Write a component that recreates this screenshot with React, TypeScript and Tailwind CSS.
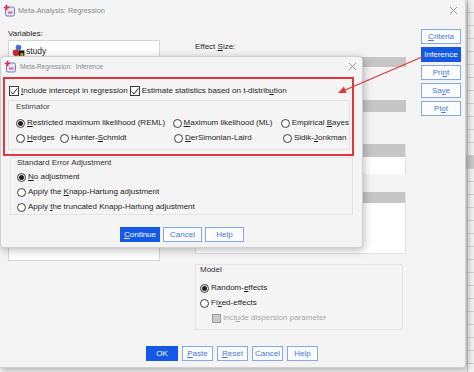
import React from "react";

const U = ({ c }: { c: string }) => <span className="underline underline-offset-[1px]">{c}</span>;

function Radio({ on }: { on?: boolean }) {
  return (
    <span className="w-[9px] h-[9px] rounded-full border border-[#3a3a3a] bg-white flex items-center justify-center shrink-0">
      {on && <span className="w-[5px] h-[5px] rounded-full bg-[#1f1f1f]" />}
    </span>
  );
}

function Check() {
  return (
    <span className="w-[10px] h-[10px] border border-[#3a3a3a] bg-white flex items-center justify-center shrink-0">
      <svg width="9" height="9" viewBox="0 0 9 9">
        <path d="M1 4.6 L3.4 7.2 L8.2 1" fill="none" stroke="#222" strokeWidth="1.1" />
      </svg>
    </span>
  );
}

function RItem({ on, children, className = "" }: { on?: boolean; children: React.ReactNode; className?: string }) {
  return (
    <div className={"flex items-center gap-[2px] h-[10px] " + className}>
      <Radio on={on} />
      <span className="whitespace-nowrap">{children}</span>
    </div>
  );
}

function CloseX() {
  return (
    <svg width="9" height="9" viewBox="0 0 9 9">
      <path d="M1 1 L8 8 M8 1 L1 8" stroke="#8d8d8d" strokeWidth="0.9" />
    </svg>
  );
}

function DlgIcon() {
  return (
    <svg width="13" height="13" viewBox="0 0 13 13">
      <rect x="2.5" y="3" width="9" height="9" rx="1.6" fill="#e9e4f3" stroke="#6a7fc4" strokeWidth="1" />
      <rect x="5" y="7.5" width="4.5" height="2" fill="#d86a8a" />
      <path d="M3.5 0.8 V6.2 M0.8 3.5 H6.2" stroke="#d6314f" strokeWidth="1.7" />
    </svg>
  );
}

function VarIcon() {
  return (
    <svg width="13" height="13" viewBox="0 0 13 13">
      <circle cx="6.5" cy="3.6" r="2.8" fill="#3f6fd1" />
      <circle cx="4" cy="8.8" r="3.3" fill="#d8262e" />
      <rect x="6.8" y="6.4" width="5.6" height="6.3" fill="#1b1b1b" />
      <text x="8" y="11.6" fontSize="6" fontFamily="Liberation Sans, sans-serif" fill="#f4d21f" fontWeight="bold">a</text>
    </svg>
  );
}

function Btn({ children, primary, className = "" }: { children: React.ReactNode; primary?: boolean; className?: string }) {
  return (
    <div
      className={
        "h-[15px] flex items-center justify-center border leading-[10px] " +
        (primary
          ? "bg-[#1459e6] border-[#1459e6] text-white "
          : "bg-[#fbfcff] border-[#86a9ec] text-[#4a78d4] ") +
        className
      }
    >
      {children}
    </div>
  );
}

export default function App() {
  const rows = Array.from({ length: 29 });
  return (
    <div className="relative w-[474px] h-[372px] overflow-hidden bg-[#ececec] font-['Liberation_Sans',sans-serif] text-[8px] leading-[10px] text-[#1f1f1f]">
      {/* spreadsheet behind */}
      <div className="flex flex-col">
        {rows.map((_, i) => (
          <div
            key={i}
            className={
              "h-[13px] border-b border-[#cfcfcf] flex " + (i === 12 ? "bg-[#c9c9c9]" : "bg-[#f1f1f1]")
            }
          >
            <div className="w-[468px] border-r border-[#c8c8c8]" />
          </div>
        ))}
      </div>

      {/* Main window */}
      <div className="absolute left-0 top-0 w-[466px] h-[368px] bg-[#f4f4f4] border-r border-b border-[#cfcfcf] rounded-br-[4px] shadow-[2px_2px_6px_rgba(0,0,0,0.28)] flex flex-col">
        <div className="h-[21px] flex items-center pl-[3px] pr-[4px] shrink-0">
          <DlgIcon />
          <span className="ml-[2px] text-[7.3px] text-[#8a8a8a]">Meta-Analysis: Regression</span>
          <span className="ml-auto mr-[3px] flex"><CloseX /></span>
        </div>
        <div className="flex flex-col">
          <div className="flex items-start">
            {/* left column */}
            <div className="pl-[8px] w-[160px] pt-[8px] flex flex-col">
              <div className="h-[10px]">Variables:</div>
              <div className="mt-[1px] h-[221px] bg-white border border-[#d6d6d6] pt-[3px] pl-[3px]">
                <div className="flex items-center gap-[1px] h-[13px]">
                  <VarIcon />
                  <span className="text-[8.5px]">study</span>
                </div>
              </div>
            </div>
            {/* middle column */}
            <div className="ml-[35px] w-[211px] pt-[21px] flex flex-col">
              <div className="h-[10px]">Effect <U c="S" />ize:</div>
              <div className="mt-[5px] h-[10px] bg-[#c6c6c6]" />
              <div className="mt-[33px] h-[12px] bg-[#c6c6c6]" />
              <div className="mt-[32px] flex flex-col border-r border-[#e2e2e2]">
                <div className="h-[13px] bg-[#c6c6c6]" />
                <div className="h-[17px] bg-white" />
              </div>
              <div className="mt-[18px] flex flex-col border border-[#e2e2e2] border-t-0">
                <div className="h-[11px] bg-[#c6c6c6]" />
                <div className="h-[50px] bg-white" />
              </div>
              <div className="mt-[10px] w-[208px] h-[66px] border border-[#e4e4e4] rounded-[2px] pl-[4px] flex flex-col">
                <div className="h-[10px] text-[#333]">Model</div>
                <RItem on className="mt-[8px]">Random-<U c="e" />ffects</RItem>
                <RItem className="mt-[5px]">Fi<U c="x" />ed-effects</RItem>
                <div className="mt-[5px] ml-[12px] flex items-center gap-[2px] h-[10px] text-[#a9a9a9]">
                  <span className="w-[9px] h-[9px] bg-[#c9c9c9] border border-[#9c9c9c] shrink-0" />
                  <span>Incl<U c="u" />de dispersion parameter</span>
                </div>
              </div>
            </div>
            {/* right column */}
            <div className="ml-[15px] w-[40px] pt-[8px] flex flex-col gap-[3px]">
              <Btn className="w-[40px]"><U c="C" />riteria</Btn>
              <Btn primary className="w-[40px]">Inference</Btn>
              <Btn className="w-[40px]">Pri<U c="n" />t</Btn>
              <Btn className="w-[40px]">Sa<U c="v" />e</Btn>
              <Btn className="w-[40px]">Pl<U c="o" />t</Btn>
            </div>
          </div>
          <div className="mt-[16px] ml-[146px] flex gap-[4px]">
            <Btn primary className="w-[32px]">OK</Btn>
            <Btn className="w-[31px]"><U c="P" />aste</Btn>
            <Btn className="w-[31px]"><U c="R" />eset</Btn>
            <Btn className="w-[31px]">Cancel</Btn>
            <Btn className="w-[31px]">Help</Btn>
          </div>
        </div>
      </div>

      {/* Inference window */}
      <div className="absolute left-0 top-[56px] w-[363px] h-[192px] bg-[#f4f4f4] border border-[#d0d0d0] rounded-[4px] shadow-[1px_2px_8px_rgba(0,0,0,0.28)] flex flex-col">
        <div className="h-[19px] flex items-center pl-[3px] pr-[5px] shrink-0">
          <DlgIcon />
          <span className="ml-[3px] text-[6.6px] text-[#8a8a8a]">Meta-Regression:&nbsp; Inference</span>
          <span className="ml-auto flex"><CloseX /></span>
        </div>
        <div className="flex flex-col">
          <div className="ml-[2px] mt-[1px] w-[351px] h-[79px] border-2 border-[#e0383c] flex flex-col">
            <div className="pt-[7px] pl-[4px] flex items-center gap-[2px] h-[17px]">
              <Check />
              <span className="whitespace-nowrap"><U c="I" />nclude intercept in regression</span>
              <Check />
              <span className="whitespace-nowrap">Estimate statistics based on t-distrib<U c="u" />tion</span>
            </div>
            <div className="ml-[3px] mt-[4px] w-[342px] h-[50px] border border-[#e3e3e3] pl-[7px] pt-[1px] flex flex-col">
              <div className="h-[10px] text-[#444]">Estimator</div>
              <div className="mt-[6px] flex">
                <RItem on className="w-[158px]"><U c="R" />estricted maximum likelihood (REML)</RItem>
                <RItem className="w-[109px]"><U c="M" />aximum likelihood (ML)</RItem>
                <RItem>Empirical <U c="B" />ayes</RItem>
              </div>
              <div className="mt-[5px] flex">
                <div className="w-[158px] flex">
                  <RItem className="w-[44px]"><U c="H" />edges</RItem>
                  <RItem>Hunter-<U c="S" />chmidt</RItem>
                </div>
                <RItem className="w-[109px]"><U c="D" />erSimonian-Laird</RItem>
                <RItem>Sidik-<U c="J" />onkman</RItem>
              </div>
            </div>
          </div>
          <div className="ml-[9px] mt-[1px] w-[343px] h-[58px] border border-[#e3e3e3] pl-[6px] flex flex-col">
            <div className="h-[10px] text-[#333]">Standard Error Adjustment</div>
            <RItem on className="mt-[4px]"><U c="N" />o adjustment</RItem>
            <RItem className="mt-[5px]">Apply the <U c="K" />napp-Hartung adjustment</RItem>
            <RItem className="mt-[5px]">Apply <U c="t" />he truncated Knapp-Hartung adjustment</RItem>
          </div>
          <div className="mt-[12px] ml-[119px] flex gap-[3px]">
            <Btn primary className="w-[40px]"><U c="C" />ontinue</Btn>
            <Btn className="w-[39px]">Cancel</Btn>
            <Btn className="w-[39px]">Help</Btn>
          </div>
        </div>
      </div>

      {/* red annotation arrow */}
      <svg className="absolute left-0 top-0 pointer-events-none" width="474" height="372" viewBox="0 0 474 372">
        <line x1="422" y1="57" x2="344" y2="90.5" stroke="#e0383c" strokeWidth="1.3" />
        <polygon points="338,93 346.7,93 343.9,86.6" fill="#e0383c" />
      </svg>
    </div>
  );
}
